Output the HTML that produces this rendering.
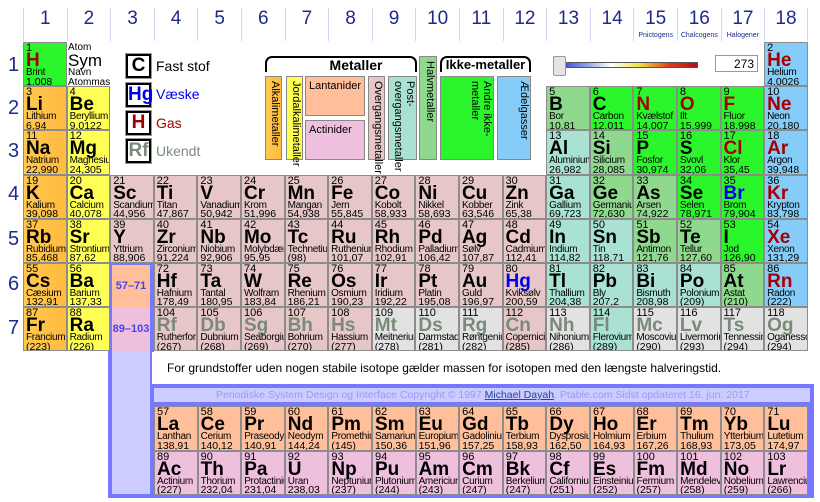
<!DOCTYPE html>
<html><head><meta charset="utf-8"><style>
*{box-sizing:border-box;margin:0;padding:0}
body{width:820px;height:502px;background:#fff;font-family:"Liberation Sans",Arial,sans-serif;position:relative;overflow:hidden}
.abs{position:absolute}
.grid{position:absolute;left:23px;top:42px;display:grid;grid-template-columns:repeat(18,43.6px);grid-auto-rows:44.2px}
.lg{position:absolute;left:154px;top:406px;display:grid;grid-template-columns:repeat(15,43.6px);grid-auto-rows:44.5px}
.x{border:1px solid #8c8c8c;overflow:hidden;white-space:nowrap;padding:0 0 0 2px;color:#000}
.x i{display:block;font-style:normal;font-size:11px;line-height:10px}
.x b{display:block;font-size:19px;line-height:16px;font-weight:bold}
.x s{display:block;text-decoration:none;font-size:10px;line-height:8.5px;letter-spacing:-.3px}
.x u{display:block;text-decoration:none;font-size:10.5px;line-height:9px}
.a{background:linear-gradient(90deg,#ffc94e,#ffbb40)}
.e{background:#ffff55}
.t{background:#e6c6c6}
.p{background:#a9e2d2}
.m{background:#8ed98e}
.n{background:#2bf52b}
.g{background:#86ccf8}
.l{background:#ffbf9a}
.c{background:#efbfde}
.u{background:#e2e2e2}
.r b{color:#a40000}.bl b{color:#0000ee}.k b{color:#7a8a78}
.hd{position:absolute;top:8px;width:43.6px;text-align:center;font-size:19px;color:#1d2a8a;border-left:1px solid #d4d4f4;height:33px}
.hd small{display:block;font-size:7px;margin-top:2px}
.pl{position:absolute;left:8px;font-size:20px;color:#1d2a8a}
.sb{position:absolute;left:126px;width:25px;height:24px;border:2px solid #000;box-shadow:0 0 0 1px #999;text-align:center;font-weight:bold;font-size:19px;line-height:20px}
.sl{position:absolute;left:156px;font-size:14px}
.v{position:absolute;top:76px;height:84px;border:1px solid #888;writing-mode:vertical-rl;font-size:11px;line-height:12px;padding-top:4px;overflow:visible;white-space:nowrap}
</style></head><body>
<div class="hd" style="left:23px">1</div><div class="hd" style="left:66.6px">2</div><div class="hd" style="left:110.2px">3</div><div class="hd" style="left:153.8px">4</div><div class="hd" style="left:197.4px">5</div><div class="hd" style="left:241px">6</div><div class="hd" style="left:284.6px">7</div><div class="hd" style="left:328.2px">8</div><div class="hd" style="left:371.8px">9</div><div class="hd" style="left:415.4px">10</div><div class="hd" style="left:459px">11</div><div class="hd" style="left:502.6px">12</div><div class="hd" style="left:546.2px">13</div><div class="hd" style="left:589.8px">14</div><div class="hd" style="left:633.4px">15<small>Pnictogens</small></div><div class="hd" style="left:677px">16<small>Chalcogens</small></div><div class="hd" style="left:720.6px">17<small>Halogener</small></div><div class="hd" style="left:764.2px;border-right:1px solid #d4d4f4">18</div>
<div class="pl" style="top:54px">1</div><div class="pl" style="top:97px">2</div><div class="pl" style="top:140px">3</div><div class="pl" style="top:183px">4</div><div class="pl" style="top:228px">5</div><div class="pl" style="top:273px">6</div><div class="pl" style="top:317px">7</div>

<div class="abs" style="left:68px;top:43px;font-size:10px;line-height:10px;width:42px;overflow:hidden;white-space:nowrap">Atom<div style="font-size:17px;line-height:15px">Sym</div>Navn<br>Atommass</div>
<div class="sb" style="top:54px">C</div><div class="sl" style="top:58px">Fast stof</div>
<div class="sb" style="top:83px;color:#0000ee">Hg</div><div class="sl" style="top:86px;color:#0000ee">Væske</div>
<div class="sb" style="top:111px;color:#a40000">H</div><div class="sl" style="top:115px;color:#a40000">Gas</div>
<div class="sb" style="top:139px;color:#7a8a78">Rf</div><div class="sl" style="top:143px;color:#7a8a78">Ukendt</div>

<div class="abs" style="left:265px;top:56px;width:152px;height:16px;border:2px solid #000;border-bottom:none;border-radius:7px 7px 0 0;text-align:center;font-weight:bold;font-size:14px;line-height:14px;padding-left:30px">Metaller</div>
<div class="abs" style="left:440px;top:56px;width:91px;height:16px;border:2px solid #000;border-bottom:none;border-radius:7px 7px 0 0;text-align:center;font-weight:bold;font-size:13px;line-height:14px">Ikke-metaller</div>
<div class="v a" style="left:265px;width:17px">Alkalimetaller</div>
<div class="v e" style="left:286px;width:17px">Jordalkalimetaller</div>
<div class="abs l" style="left:305px;top:76px;width:60px;height:40px;border:1px solid #888;font-size:11px;padding:3px">Lantanider</div>
<div class="abs c" style="left:305px;top:120px;width:60px;height:40px;border:1px solid #888;font-size:11px;padding:3px">Actinider</div>
<div class="v t" style="left:368px;width:17px">Overgangsmetaller</div>
<div class="v p" style="left:388px;width:29px">Post-<br>overgangsmetaller</div>
<div class="v m" style="left:419px;top:56px;height:104px;width:18px">Halvmetaller</div>
<div class="v n" style="left:440px;width:54px">Andre ikke-<br>metaller</div>
<div class="v g" style="left:497px;width:34px">Ædelgasser</div>

<div class="abs" style="left:553px;top:62px;width:145px;height:6px;border:1px solid #555;background:linear-gradient(90deg,#2030c0,#8090e0,#fff,#f0e040,#e04020,#b01010)"></div>
<div class="abs" style="left:553px;top:56px;width:13px;height:20px;background:#e4e4e4;border:1px solid #999;border-radius:2px"></div>
<div class="abs" style="left:715px;top:55px;width:43px;height:17px;border:1px solid #999;text-align:right;font-size:12px;padding:1px 3px">273</div>

<!-- frame -->
<div class="abs" style="left:108px;top:384px;width:706px;height:114px;background:#ccccff;border:4px solid #7777ff;border-left:none"></div>
<div class="abs" style="left:108px;top:261px;width:46px;height:237px;background:#ccccff;border:4px solid #7777ff"></div>
<div class="abs" style="left:150px;top:348px;width:664px;height:40px;background:#fff;border:4px solid #7777ff;border-top:none;border-right:none"></div>
<div class="abs" style="left:152px;top:352px;width:662px;height:32px;background:#fff"></div>
<div class="abs" style="left:112px;top:265px;width:38px;height:42px;background:#ffbf9a;color:#4444ee;font-size:11px;text-align:center;line-height:42px;font-weight:bold">57–71</div>
<div class="abs" style="left:112px;top:307px;width:38px;height:45px;background:#efbfde;color:#4444ee;font-size:11px;text-align:center;line-height:45px;font-weight:bold">89–103</div>
<div class="abs" style="left:167px;top:361px;font-size:12px">For grundstoffer uden nogen stabile isotope gælder massen for isotopen med den længste halveringstid.</div>
<div class="abs" style="left:216px;top:389px;font-size:10.5px;color:#9999ff">Periodiske System Design og Interface Copyright © 1997 <span style="color:#2244aa;text-decoration:underline">Michael Dayah</span>. Ptable.com Sidst opdateret 16. jun. 2017</div>
<div class="abs" style="left:150px;top:402px;width:660px;height:96px;background:#fff;border:4px solid #7777ff"></div>

<div class="grid">
<div class="x n r"><i>1</i><b>H</b><s>Brint</s><u>1,008</u></div>
<div class="x g r" style="grid-column:18"><i>2</i><b>He</b><s>Helium</s><u>4,0026</u></div>
<div class="x a"><i>3</i><b>Li</b><s>Lithium</s><u>6,94</u></div>
<div class="x e"><i>4</i><b>Be</b><s>Beryllium</s><u>9,0122</u></div>
<div class="x m" style="grid-column:13"><i>5</i><b>B</b><s>Bor</s><u>10,81</u></div>
<div class="x n"><i>6</i><b>C</b><s>Carbon</s><u>12,011</u></div>
<div class="x n r"><i>7</i><b>N</b><s>Kvælstof</s><u>14,007</u></div>
<div class="x n r"><i>8</i><b>O</b><s>Ilt</s><u>15,999</u></div>
<div class="x n r"><i>9</i><b>F</b><s>Fluor</s><u>18,998</u></div>
<div class="x g r"><i>10</i><b>Ne</b><s>Neon</s><u>20,180</u></div>
<div class="x a"><i>11</i><b>Na</b><s>Natrium</s><u>22,990</u></div>
<div class="x e"><i>12</i><b>Mg</b><s>Magnesium</s><u>24,305</u></div>
<div class="x p" style="grid-column:13"><i>13</i><b>Al</b><s>Aluminium</s><u>26,982</u></div>
<div class="x m"><i>14</i><b>Si</b><s>Silicium</s><u>28,085</u></div>
<div class="x n"><i>15</i><b>P</b><s>Fosfor</s><u>30,974</u></div>
<div class="x n"><i>16</i><b>S</b><s>Svovl</s><u>32,06</u></div>
<div class="x n r"><i>17</i><b>Cl</b><s>Klor</s><u>35,45</u></div>
<div class="x g r"><i>18</i><b>Ar</b><s>Argon</s><u>39,948</u></div>
<div class="x a"><i>19</i><b>K</b><s>Kalium</s><u>39,098</u></div>
<div class="x e"><i>20</i><b>Ca</b><s>Calcium</s><u>40,078</u></div>
<div class="x t"><i>21</i><b>Sc</b><s>Scandium</s><u>44,956</u></div>
<div class="x t"><i>22</i><b>Ti</b><s>Titan</s><u>47,867</u></div>
<div class="x t"><i>23</i><b>V</b><s>Vanadium</s><u>50,942</u></div>
<div class="x t"><i>24</i><b>Cr</b><s>Krom</s><u>51,996</u></div>
<div class="x t"><i>25</i><b>Mn</b><s>Mangan</s><u>54,938</u></div>
<div class="x t"><i>26</i><b>Fe</b><s>Jern</s><u>55,845</u></div>
<div class="x t"><i>27</i><b>Co</b><s>Kobolt</s><u>58,933</u></div>
<div class="x t"><i>28</i><b>Ni</b><s>Nikkel</s><u>58,693</u></div>
<div class="x t"><i>29</i><b>Cu</b><s>Kobber</s><u>63,546</u></div>
<div class="x t"><i>30</i><b>Zn</b><s>Zink</s><u>65,38</u></div>
<div class="x p"><i>31</i><b>Ga</b><s>Gallium</s><u>69,723</u></div>
<div class="x m"><i>32</i><b>Ge</b><s>Germanium</s><u>72,630</u></div>
<div class="x m"><i>33</i><b>As</b><s>Arsen</s><u>74,922</u></div>
<div class="x n"><i>34</i><b>Se</b><s>Selen</s><u>78,971</u></div>
<div class="x n bl"><i>35</i><b>Br</b><s>Brom</s><u>79,904</u></div>
<div class="x g r"><i>36</i><b>Kr</b><s>Krypton</s><u>83,798</u></div>
<div class="x a"><i>37</i><b>Rb</b><s>Rubidium</s><u>85,468</u></div>
<div class="x e"><i>38</i><b>Sr</b><s>Strontium</s><u>87,62</u></div>
<div class="x t"><i>39</i><b>Y</b><s>Yttrium</s><u>88,906</u></div>
<div class="x t"><i>40</i><b>Zr</b><s>Zirconium</s><u>91,224</u></div>
<div class="x t"><i>41</i><b>Nb</b><s>Niobium</s><u>92,906</u></div>
<div class="x t"><i>42</i><b>Mo</b><s>Molybdæn</s><u>95,95</u></div>
<div class="x t"><i>43</i><b>Tc</b><s>Technetium</s><u>(98)</u></div>
<div class="x t"><i>44</i><b>Ru</b><s>Ruthenium</s><u>101,07</u></div>
<div class="x t"><i>45</i><b>Rh</b><s>Rhodium</s><u>102,91</u></div>
<div class="x t"><i>46</i><b>Pd</b><s>Palladium</s><u>106,42</u></div>
<div class="x t"><i>47</i><b>Ag</b><s>Sølv</s><u>107,87</u></div>
<div class="x t"><i>48</i><b>Cd</b><s>Cadmium</s><u>112,41</u></div>
<div class="x p"><i>49</i><b>In</b><s>Indium</s><u>114,82</u></div>
<div class="x p"><i>50</i><b>Sn</b><s>Tin</s><u>118,71</u></div>
<div class="x m"><i>51</i><b>Sb</b><s>Antimon</s><u>121,76</u></div>
<div class="x m"><i>52</i><b>Te</b><s>Tellur</s><u>127,60</u></div>
<div class="x n"><i>53</i><b>I</b><s>Jod</s><u>126,90</u></div>
<div class="x g r"><i>54</i><b>Xe</b><s>Xenon</s><u>131,29</u></div>
<div class="x a"><i>55</i><b>Cs</b><s>Cæsium</s><u>132,91</u></div>
<div class="x e"><i>56</i><b>Ba</b><s>Barium</s><u>137,33</u></div>
<div class="x t" style="grid-column:4"><i>72</i><b>Hf</b><s>Hafnium</s><u>178,49</u></div>
<div class="x t"><i>73</i><b>Ta</b><s>Tantal</s><u>180,95</u></div>
<div class="x t"><i>74</i><b>W</b><s>Wolfram</s><u>183,84</u></div>
<div class="x t"><i>75</i><b>Re</b><s>Rhenium</s><u>186,21</u></div>
<div class="x t"><i>76</i><b>Os</b><s>Osmium</s><u>190,23</u></div>
<div class="x t"><i>77</i><b>Ir</b><s>Iridium</s><u>192,22</u></div>
<div class="x t"><i>78</i><b>Pt</b><s>Platin</s><u>195,08</u></div>
<div class="x t"><i>79</i><b>Au</b><s>Guld</s><u>196,97</u></div>
<div class="x t bl"><i>80</i><b>Hg</b><s>Kviksølv</s><u>200,59</u></div>
<div class="x p"><i>81</i><b>Tl</b><s>Thallium</s><u>204,38</u></div>
<div class="x p"><i>82</i><b>Pb</b><s>Bly</s><u>207,2</u></div>
<div class="x p"><i>83</i><b>Bi</b><s>Bismuth</s><u>208,98</u></div>
<div class="x p"><i>84</i><b>Po</b><s>Polonium</s><u>(209)</u></div>
<div class="x m"><i>85</i><b>At</b><s>Astat</s><u>(210)</u></div>
<div class="x g r"><i>86</i><b>Rn</b><s>Radon</s><u>(222)</u></div>
<div class="x a"><i>87</i><b>Fr</b><s>Francium</s><u>(223)</u></div>
<div class="x e"><i>88</i><b>Ra</b><s>Radium</s><u>(226)</u></div>
<div class="x t k" style="grid-column:4"><i>104</i><b>Rf</b><s>Rutherfordium</s><u>(267)</u></div>
<div class="x t k"><i>105</i><b>Db</b><s>Dubnium</s><u>(268)</u></div>
<div class="x t k"><i>106</i><b>Sg</b><s>Seaborgium</s><u>(269)</u></div>
<div class="x t k"><i>107</i><b>Bh</b><s>Bohrium</s><u>(270)</u></div>
<div class="x t k"><i>108</i><b>Hs</b><s>Hassium</s><u>(277)</u></div>
<div class="x u k"><i>109</i><b>Mt</b><s>Meitnerium</s><u>(278)</u></div>
<div class="x u k"><i>110</i><b>Ds</b><s>Darmstadtium</s><u>(281)</u></div>
<div class="x u k"><i>111</i><b>Rg</b><s>Røntgenium</s><u>(282)</u></div>
<div class="x t k"><i>112</i><b>Cn</b><s>Copernicium</s><u>(285)</u></div>
<div class="x u k"><i>113</i><b>Nh</b><s>Nihonium</s><u>(286)</u></div>
<div class="x p k"><i>114</i><b>Fl</b><s>Flerovium</s><u>(289)</u></div>
<div class="x u k"><i>115</i><b>Mc</b><s>Moscovium</s><u>(290)</u></div>
<div class="x u k"><i>116</i><b>Lv</b><s>Livermorium</s><u>(293)</u></div>
<div class="x u k"><i>117</i><b>Ts</b><s>Tennessine</s><u>(294)</u></div>
<div class="x u k"><i>118</i><b>Og</b><s>Oganesson</s><u>(294)</u></div>
</div>

<div class="lg">
<div class="x l"><i>57</i><b>La</b><s>Lanthan</s><u>138,91</u></div>
<div class="x l"><i>58</i><b>Ce</b><s>Cerium</s><u>140,12</u></div>
<div class="x l"><i>59</i><b>Pr</b><s>Praseodym</s><u>140,91</u></div>
<div class="x l"><i>60</i><b>Nd</b><s>Neodym</s><u>144,24</u></div>
<div class="x l"><i>61</i><b>Pm</b><s>Promethium</s><u>(145)</u></div>
<div class="x l"><i>62</i><b>Sm</b><s>Samarium</s><u>150,36</u></div>
<div class="x l"><i>63</i><b>Eu</b><s>Europium</s><u>151,96</u></div>
<div class="x l"><i>64</i><b>Gd</b><s>Gadolinium</s><u>157,25</u></div>
<div class="x l"><i>65</i><b>Tb</b><s>Terbium</s><u>158,93</u></div>
<div class="x l"><i>66</i><b>Dy</b><s>Dysprosium</s><u>162,50</u></div>
<div class="x l"><i>67</i><b>Ho</b><s>Holmium</s><u>164,93</u></div>
<div class="x l"><i>68</i><b>Er</b><s>Erbium</s><u>167,26</u></div>
<div class="x l"><i>69</i><b>Tm</b><s>Thulium</s><u>168,93</u></div>
<div class="x l"><i>70</i><b>Yb</b><s>Ytterbium</s><u>173,05</u></div>
<div class="x l"><i>71</i><b>Lu</b><s>Lutetium</s><u>174,97</u></div>
<div class="x c"><i>89</i><b>Ac</b><s>Actinium</s><u>(227)</u></div>
<div class="x c"><i>90</i><b>Th</b><s>Thorium</s><u>232,04</u></div>
<div class="x c"><i>91</i><b>Pa</b><s>Protactinium</s><u>231,04</u></div>
<div class="x c"><i>92</i><b>U</b><s>Uran</s><u>238,03</u></div>
<div class="x c"><i>93</i><b>Np</b><s>Neptunium</s><u>(237)</u></div>
<div class="x c"><i>94</i><b>Pu</b><s>Plutonium</s><u>(244)</u></div>
<div class="x c"><i>95</i><b>Am</b><s>Americium</s><u>(243)</u></div>
<div class="x c"><i>96</i><b>Cm</b><s>Curium</s><u>(247)</u></div>
<div class="x c"><i>97</i><b>Bk</b><s>Berkelium</s><u>(247)</u></div>
<div class="x c"><i>98</i><b>Cf</b><s>Californium</s><u>(251)</u></div>
<div class="x c"><i>99</i><b>Es</b><s>Einsteinium</s><u>(252)</u></div>
<div class="x c"><i>100</i><b>Fm</b><s>Fermium</s><u>(257)</u></div>
<div class="x c"><i>101</i><b>Md</b><s>Mendelevium</s><u>(258)</u></div>
<div class="x c"><i>102</i><b>No</b><s>Nobelium</s><u>(259)</u></div>
<div class="x c"><i>103</i><b>Lr</b><s>Lawrencium</s><u>(266)</u></div>
</div>
</body></html>
